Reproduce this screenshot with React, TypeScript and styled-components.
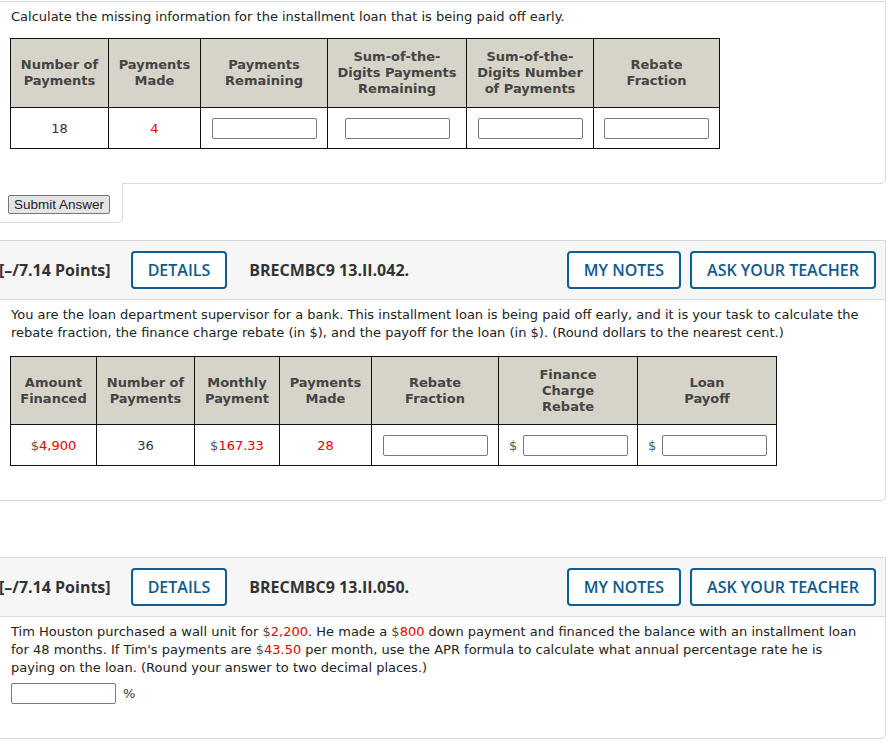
import React from 'react'
import styled, { createGlobalStyle } from 'styled-components'

const GlobalStyle = createGlobalStyle`
  html, body {
    margin: 0;
    padding: 0;
    background: #fff;
    overflow: hidden;
  }
  body {
    font-family: "DejaVu Sans", Verdana, sans-serif;
    font-size: 13px;
    color: #222;
  }
`

const Page = styled.div`
  width: 898px;
  margin-left: -12px;
  padding-top: 1px;
`

const Card = styled.section<{ $mt?: number; $pb?: number }>`
  margin-top: ${p => p.$mt || 0}px;
  border: 1px solid #d8d8d8;
  border-radius: 0 0 5px 5px;
  background: #fff;
  padding-bottom: ${p => p.$pb || 0}px;
`

const HeaderBar = styled.div`
  display: flex;
  align-items: center;
  height: 58px;
  padding: 0 9px 0 10px;
  background: #f6f6f6;
  border-bottom: 1px solid #dcdcdc;
  font-family: "Open Sans", "Noto Sans", sans-serif;
  color: #333;
`

const Points = styled.span`
  font-weight: 700;
  font-size: 16px;
  margin-right: 20px;
`

const Code = styled.span`
  font-weight: 700;
  font-size: 16px;
  margin-left: 22px;
  flex: 1;
`

const OutlineButton = styled.button<{ $ml?: number }>`
  height: 38px;
  box-sizing: border-box;
  padding: 0 15px;
  margin-left: ${p => p.$ml || 0}px;
  border: 2px solid #0b5f93;
  border-radius: 4px;
  background: #fff;
  color: #12598a;
  font-family: "Open Sans", "Noto Sans", sans-serif;
  font-size: 16px;
  font-weight: 600;
  cursor: pointer;
`

const Body = styled.div<{ $pt?: number }>`
  padding: ${p => p.$pt || 6}px 20px 0 22px;
`

const Para = styled.p`
  margin: 0;
  line-height: 18px;
`

const Red = styled.span`
  color: #e80000;
`

const Table = styled.table<{ $mt: number }>`
  margin: ${p => p.$mt}px 0 0 -1px;
  border-collapse: collapse;
  table-layout: fixed;
`

const Th = styled.th<{ $w: number; $h: number }>`
  width: ${p => p.$w}px;
  height: ${p => p.$h}px;
  padding: 0 2px;
  box-sizing: border-box;
  background: #d6d3c9;
  border: 1px solid #111;
  color: #444;
  font-weight: 700;
  font-size: 13px;
  line-height: 16px;
  text-align: center;
  vertical-align: middle;
`

const Td = styled.td<{ $red?: boolean }>`
  height: 41px;
  box-sizing: border-box;
  padding: 0 4px;
  border: 1px solid #111;
  text-align: center;
  vertical-align: middle;
  color: ${p => (p.$red ? '#e80000' : '#333')};
`

const Dollar = styled.span`
  color: #555;
`

const AnswerBox = styled.input<{ $w?: number }>`
  width: ${p => p.$w || 105}px;
  height: 21px;
  box-sizing: border-box;
  border: 1px solid #7a7a7a;
  border-radius: 2px;
  background: #fff;
  padding: 0 3px;
  font-family: inherit;
  font-size: 13px;
  vertical-align: middle;
`

const MoneyCell = styled.div`
  display: flex;
  align-items: center;
  gap: 6px;
  padding-left: 6px;
  color: #555;
`

const SubmitTab = styled.div`
  position: relative;
  z-index: 1;
  width: 135px;
  box-sizing: border-box;
  margin-top: -1px;
  padding: 12px 0 8px 20px;
  background: #fff;
  border-right: 1px solid #d8d8d8;
  border-bottom: 1px solid #d8d8d8;
  border-radius: 0 0 5px 0;
`

const SubmitButton = styled.button`
  height: 19px;
  padding: 0 5px;
  border: 1px solid #767676;
  border-radius: 2px;
  background: #e5e5e5;
  color: #222;
  font-family: "Liberation Sans", Arial, sans-serif;
  font-size: 13.5px;
  line-height: 17px;
`

const PercentRow = styled.div`
  display: flex;
  align-items: center;
  gap: 7px;
  margin-top: 6px;
  color: #333;
`

type Cell = { text?: string; red?: boolean; money?: boolean; input?: boolean; dollarRed?: string }

function ValueCell({ cell }: { cell: Cell }) {
  if (cell.input) return <Td><AnswerBox /></Td>
  if (cell.money) return (
    <Td>
      <MoneyCell>$<AnswerBox /></MoneyCell>
    </Td>
  )
  if (cell.dollarRed) return (
    <Td><Dollar>$</Dollar><Red>{cell.dollarRed}</Red></Td>
  )
  return <Td $red={cell.red}>{cell.text}</Td>
}

function DataTable({ heads, widths, cells, mt, headH }: {
  heads: React.ReactNode[]
  widths: number[]
  cells: Cell[]
  mt: number
  headH: number
}) {
  return (
    <Table $mt={mt}>
      <thead>
        <tr>
          {heads.map((h, i) => <Th key={i} $w={widths[i]} $h={headH}>{h}</Th>)}
        </tr>
      </thead>
      <tbody>
        <tr>
          {cells.map((c, i) => <ValueCell key={i} cell={c} />)}
        </tr>
      </tbody>
    </Table>
  )
}

function QuestionHeader({ code }: { code: string }) {
  return (
    <HeaderBar>
      <Points>[–/7.14 Points]</Points>
      <OutlineButton>DETAILS</OutlineButton>
      <Code>{code}</Code>
      <OutlineButton>MY NOTES</OutlineButton>
      <OutlineButton $ml={9}>ASK YOUR TEACHER</OutlineButton>
    </HeaderBar>
  )
}

export default function App() {
  return (
    <>
      <GlobalStyle />
      <Page>
        <Card $pb={34}>
          <Body>
            <Para>Calculate the missing information for the installment loan that is being paid off early.</Para>
            <DataTable
              mt={12}
              headH={69}
              widths={[98, 92, 127, 139, 127, 126]}
              heads={[
                <>Number of<br />Payments</>,
                <>Payments<br />Made</>,
                <>Payments<br />Remaining</>,
                <>Sum-of-the-<br />Digits Payments<br />Remaining</>,
                <>Sum-of-the-<br />Digits Number<br />of Payments</>,
                <>Rebate<br />Fraction</>,
              ]}
              cells={[{ text: '18' }, { text: '4', red: true }, { input: true }, { input: true }, { input: true }, { input: true }]}
            />
          </Body>
        </Card>
        <SubmitTab>
          <SubmitButton>Submit Answer</SubmitButton>
        </SubmitTab>

        <Card $mt={17} $pb={34}>
          <QuestionHeader code="BRECMBC9 13.II.042." />
          <Body $pt={6}>
            <Para>
              You are the loan department supervisor for a bank. This installment loan is being paid off early, and it is your task to calculate the rebate fraction, the finance charge rebate (in $), and the payoff for the loan (in $). (Round dollars to the nearest cent.)
            </Para>
            <DataTable
              mt={14}
              headH={68}
              widths={[86, 98, 85, 92, 127, 139, 139]}
              heads={[
                <>Amount<br />Financed</>,
                <>Number of<br />Payments</>,
                <>Monthly<br />Payment</>,
                <>Payments<br />Made</>,
                <>Rebate<br />Fraction</>,
                <>Finance<br />Charge<br />Rebate</>,
                <>Loan<br />Payoff</>,
              ]}
              cells={[
                { dollarRed: '4,900' },
                { text: '36' },
                { dollarRed: '167.33' },
                { text: '28', red: true },
                { input: true },
                { money: true },
                { money: true },
              ]}
            />
          </Body>
        </Card>

        <Card $mt={56} $pb={34}>
          <QuestionHeader code="BRECMBC9 13.II.050." />
          <Body $pt={6}>
            <Para>
              Tim Houston purchased a wall unit for <Dollar>$</Dollar><Red>2,200</Red>. He made a <Dollar>$</Dollar><Red>800</Red> down payment and financed the balance with an installment loan for 48 months. If Tim's payments are <Dollar>$</Dollar><Red>43.50</Red> per month, use the APR formula to calculate what annual percentage rate he is paying on the loan. (Round your answer to two decimal places.)
            </Para>
            <PercentRow>
              <AnswerBox />
              <span>%</span>
            </PercentRow>
          </Body>
        </Card>
      </Page>
    </>
  )
}
